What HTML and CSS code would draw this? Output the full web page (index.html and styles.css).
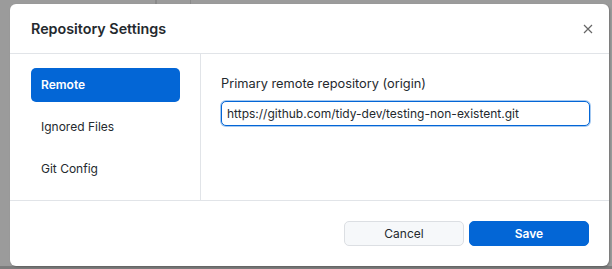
FILE: index.html
```html
<!DOCTYPE html>
<html lang="en">
<head>
    <meta charset="UTF-8">
    <meta name="viewport" content="width=device-width, initial-scale=1.0">
    <title>Repository Settings</title>
    <link rel="stylesheet" href="styles.css">
</head>
<body>
    <div class="backdrop">
        <div class="modal">
            <div class="modal-header">
                <h1>Repository Settings</h1>
                <button class="close-button" aria-label="Close">
                    <svg width="10" height="10" viewBox="0 0 10 10"><path d="M1 1 L9 9 M9 1 L1 9" stroke="#666" stroke-width="1.2" fill="none"/></svg>
                </button>
            </div>
            <div class="modal-body">
                <div class="sidebar">
                    <div class="tab active">Remote</div>
                    <div class="tab">Ignored Files</div>
                    <div class="tab">Git Config</div>
                </div>
                <div class="content">
                    <label for="remote">Primary remote repository (origin)</label>
                    <input type="text" id="remote" value="https://github.com/tidy-dev/testing-non-existent.git">
                </div>
            </div>
            <div class="modal-footer">
                <button class="btn">Cancel</button>
                <button class="btn primary">Save</button>
            </div>
        </div>
    </div>
</body>
</html>
```

FILE: styles.css
```css
body {
    margin: 0;
    font-family: Inter, "Liberation Sans", sans-serif;
    background-color: #9b9b9b;
    color: #24292e;
}

/* the app window behind the dialog, greyed out */
.backdrop {
    width: 612px;
    height: 269px;
    box-sizing: border-box;
    padding: 4px 3px 0 10px;
    background:
        linear-gradient(to right, transparent 155px, #8a8a8a 155px, #8a8a8a 157px, transparent 157px, transparent 190px, #8a8a8a 190px, #8a8a8a 191px, transparent 191px) top / 100% 4px no-repeat,
        linear-gradient(to bottom, #9b9b9b 266px, #7c7c7c 266px);
}

.modal {
    width: 599px;
    height: 262px;
    background-color: #fff;
    border-radius: 6px;
    box-shadow: 1px 1px 2px rgba(0, 0, 0, 0.25);
    display: flex;
    flex-direction: column;
}

.modal-header {
    height: 49px;
    display: flex;
    align-items: center;
    justify-content: space-between;
    padding: 0 14px 0 21px;
    border-bottom: 1px solid #e1e4e8;
}

.modal-header h1 {
    margin: 0;
    font-size: 14.3px;
    font-weight: 600;
}

.close-button {
    background: none;
    border: none;
    padding: 0;
    width: 14px;
    height: 14px;
    display: flex;
    align-items: center;
    justify-content: center;
}

.modal-body {
    height: 146px;
    display: flex;
    border-bottom: 1px solid #e1e4e8;
}

.sidebar {
    width: 191px;
    box-sizing: border-box;
    border-right: 1px solid #e1e4e8;
    padding: 14px 20px 14px 21px;
    display: flex;
    flex-direction: column;
    gap: 8px;
}

.tab {
    height: 34px;
    line-height: 34px;
    padding: 0 10px;
    border-radius: 5px;
    font-size: 12px;
}

.tab.active {
    background-color: #0366d6;
    color: #fff;
    font-weight: 600;
}

.content {
    flex: 1;
    padding: 22px 19px 0 20px;
}

label {
    display: block;
    font-size: 12.8px;
    line-height: 16px;
    margin-bottom: 9px;
}

input {
    width: 100%;
    height: 25px;
    box-sizing: border-box;
    padding: 0 5px;
    font-family: Inter, "Liberation Sans", sans-serif;
    font-size: 12px;
    color: #24292e;
    border: 1px solid #0366d6;
    border-radius: 5px;
    box-shadow: 0 0 0 1px rgba(3, 102, 214, 0.35);
    outline: none;
}

.modal-footer {
    flex: 1;
    display: flex;
    justify-content: flex-end;
    align-items: center;
    gap: 5px;
    padding: 0 20px 0 0;
}

.btn {
    width: 120px;
    height: 25px;
    border: 1px solid #dcdfe3;
    border-radius: 5px;
    background-color: #f6f8fa;
    color: #24292e;
    font-family: Inter, "Liberation Sans", sans-serif;
    font-size: 12px;
}

.btn.primary {
    background-color: #0366d6;
    border-color: #0366d6;
    color: #fff;
    font-weight: 600;
}
```
